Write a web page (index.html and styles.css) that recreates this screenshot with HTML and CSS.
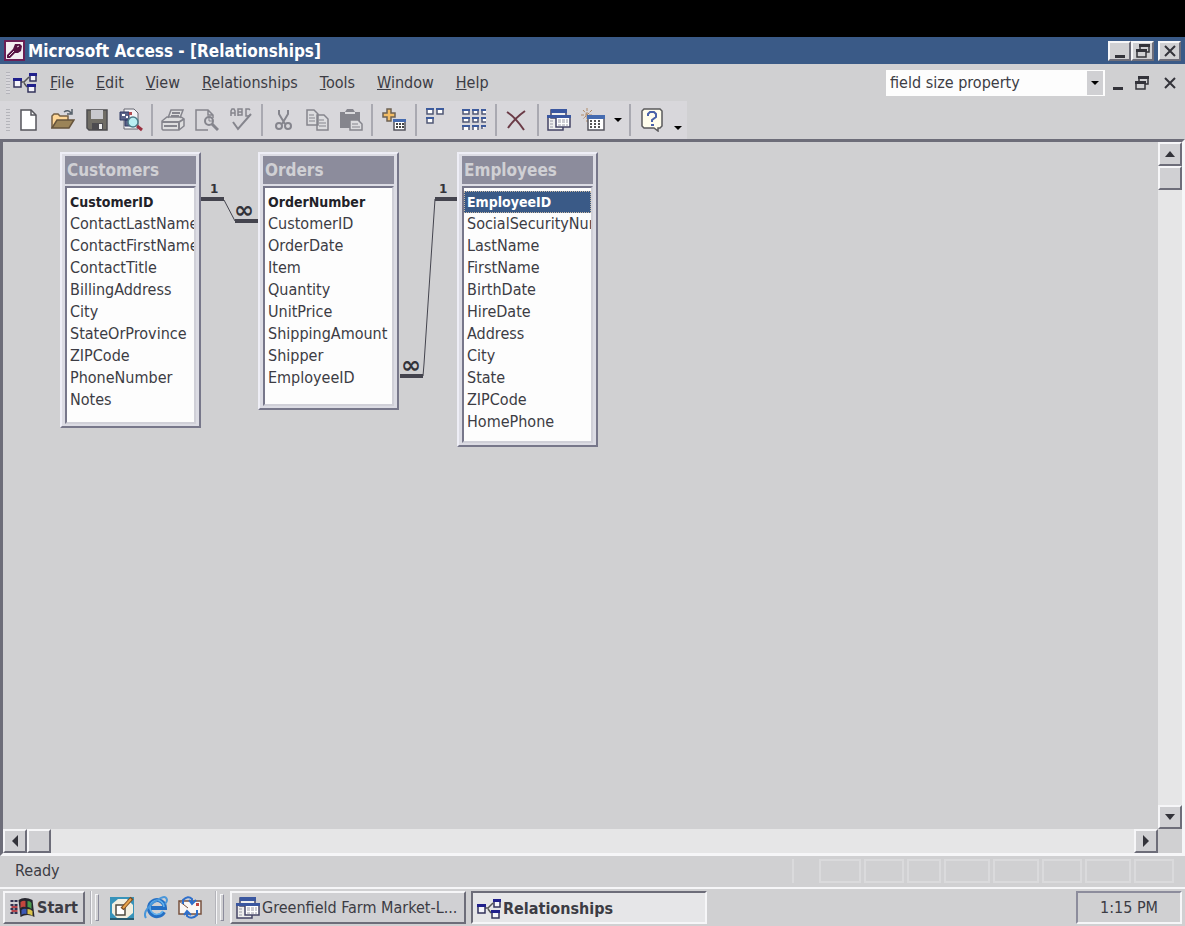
FILE: index.html
```
<!DOCTYPE html>
<html lang="en">
<head>
  <meta charset="UTF-8">
  <meta name="viewport" content="width=device-width, initial-scale=1.0">
  <title>Microsoft Access - [Relationships]</title>
  <link rel="stylesheet" href="styles.css">
</head>
<body>
  <svg class="defs" aria-hidden="true">
    <symbol id="rel" viewBox="0 0 24 20">
      <path d="M8 9h3l5-5M11 10l3 4" fill="none" stroke="#555" stroke-width="1.5"/>
      <path d="M1 6h7v8H1zM17 1h6v7h-6zM15 12h7v7h-7z" fill="#f4f4fa" stroke="#33335c" stroke-width="1.5"/>
      <path d="M0 5h9v3H0zM16 0h8v3h-8zM14 11h9v3h-9z" fill="#20208c"/>
    </symbol>
    <symbol id="min" viewBox="0 0 14 14"><path d="M2 11h10v3H2z" fill="#33333a"/></symbol>
    <symbol id="restore" viewBox="0 0 14 14">
      <path d="M4 5V1h9v7h-3M1 6h9v7H1z" fill="none" stroke="#33333a" stroke-width="1.5"/>
      <path d="M3 0h11v3H3zM0 5h11v3H0z" fill="#33333a"/>
    </symbol>
    <symbol id="close" viewBox="0 0 14 14"><path d="M2 2l10 10M12 2L2 12" stroke="#33333a" stroke-width="2"/></symbol>
    <symbol id="tables" viewBox="0 0 24 22">
      <path d="M1 7h15v14H1zM4 1h15v8H4z" fill="#eee" stroke="#444466" stroke-width="1.5"/>
      <path d="M4 0h16v4H4zM0 6h10v3H0z" fill="#3a57a0"/>
      <path d="M9 7h14v11H9z" fill="#fff" stroke="#444466" stroke-width="1.5"/>
      <path d="M8 6h16v3H8z" fill="#3a57a0"/>
      <path d="M11 11h10M11 13h10M11 16h10M3 12h4M3 15h4M3 18h4" stroke="#9a9aa6" stroke-dasharray="3 1"/>
    </symbol>
  </svg>

  <header class="titlebar">
    <svg class="key" viewBox="0 0 21 21">
      <path d="M1 1h19v19H1z" fill="#f3eef2" stroke="#6b1f55" stroke-width="2"/>
      <path d="M11 4h5l2 2-1 5-3 2h-3l-5 5H3v-3l6-6z" fill="#571343"/>
      <path d="M13 7l2-1M5 16l5-5" stroke="#e9d9e4"/>
    </svg>
    <h1>Microsoft Access - [Relationships]</h1>
    <div class="window-buttons">
      <button class="raised" aria-label="Minimize"><svg><use href="#min"/></svg></button>
      <button class="raised" aria-label="Restore"><svg><use href="#restore"/></svg></button>
      <button class="raised last" aria-label="Close"><svg><use href="#close"/></svg></button>
    </div>
  </header>

  <nav class="menubar">
    <span class="grip"></span>
    <svg class="rel-icon"><use href="#rel"/></svg>
    <button><u>F</u>ile</button>
    <button><u>E</u>dit</button>
    <button><u>V</u>iew</button>
    <button><u>R</u>elationships</button>
    <button><u>T</u>ools</button>
    <button><u>W</u>indow</button>
    <button><u>H</u>elp</button>
    <div class="ask">
      <input type="text" value="field size property" aria-label="Type a question for help">
      <button aria-label="Show questions"><svg viewBox="0 0 8 4"><path d="M0 0h8L4 4z"/></svg></button>
    </div>
    <div class="doc-buttons">
      <button aria-label="Minimize document"><svg><use href="#min"/></svg></button>
      <button aria-label="Restore document"><svg><use href="#restore"/></svg></button>
      <button class="last" aria-label="Close document"><svg><use href="#close"/></svg></button>
    </div>
  </nav>

  <div class="toolbar-row">
    <div class="toolbar">
      <span class="grip"></span>
      <button aria-label="New"><svg viewBox="0 0 24 24"><path d="M4 2h10l5 5v15H4z" fill="#fff" stroke="#55555c" stroke-width="1.5"/><path d="M14 2v5h5" fill="none" stroke="#55555c" stroke-width="1.5"/></svg></button>
      <button aria-label="Open"><svg viewBox="0 0 24 24"><path d="M1 20V8l2-2h4l2 2h8v4" fill="#ffd797" stroke="#756044" stroke-width="1.5"/><path d="M1 20l5-8h17l-5 8z" fill="#9b8458" stroke="#66543c" stroke-width="1.5"/><path d="M13 4q4-3 7 1M21 1v5h-5" fill="none" stroke="#55606a" stroke-width="1.5"/></svg></button>
      <button aria-label="Save"><svg viewBox="0 0 24 24"><path d="M2 2h20v20H4l-2-2z" fill="#706d65" stroke="#4e4e50" stroke-width="1.5"/><path d="M6 2h12v9H6z" fill="#c9c9ce"/><path d="M7 15h11v7H7z" fill="#4d4c50"/><path d="M14 16h3v5h-3z" fill="#eee"/></svg></button>
      <button aria-label="Search"><svg viewBox="0 0 24 24"><path d="M5 1h10l4 4v16H5z" fill="#f3f3f6" stroke="#666670"/><path d="M1 4h9v8H1zM6 12h7v6H6z" fill="#5a6388" stroke="#333c66"/><path d="M3 6h3v2H3zM7 8h2v2H7z" fill="#fff"/><path d="M10 4h3v3h-3z" fill="#b14b50"/><circle cx="14" cy="14" r="5" fill="#b9eef2" stroke="#4d7c88" stroke-width="1.5"/><path d="M18 18l5 4" stroke="#9a3040" stroke-width="3"/></svg></button>
      <span class="sep"></span>
      <button aria-label="Print" disabled><svg viewBox="0 0 24 24"><path d="M7 10l3-8h12l-3 8M1 13l5-4h14l3 2v7l-5 4H2l-1-1z" fill="#dededf" stroke="#85858d" stroke-width="1.5"/><path d="M1 14h17l5-3M18 14v8M11 5h8M10 8h8M3 18h13" fill="none" stroke="#85858d" stroke-width="2"/></svg></button>
      <button aria-label="Print Preview" disabled><svg viewBox="0 0 24 24"><path d="M13 22H1V2h12l5 5v3M13 2v5h5" fill="none" stroke="#85858d" stroke-width="1.5"/><circle cx="14" cy="13" r="4" fill="none" stroke="#85858d" stroke-width="2"/><path d="M17 16l6 6" stroke="#85858d" stroke-width="3"/><path d="M14 10v3h3" fill="none" stroke="#85858d"/></svg></button>
      <button aria-label="Spelling" disabled><svg viewBox="0 0 24 24"><path d="M2 8V3l1-2h2l1 2v5M2 5h4M9 8V1h4v6H9M9 4h4M21 2l-1-1h-3v7h3l1-1" fill="none" stroke="#85858d" stroke-width="1.5"/><path d="M4 14l5 7L22 6" fill="none" stroke="#85858d" stroke-width="2"/></svg></button>
      <span class="sep"></span>
      <button aria-label="Cut" disabled><svg viewBox="0 0 24 24"><path d="M8 2v4l6 10M17 2v4l-6 10" fill="none" stroke="#85858d" stroke-width="2"/><circle cx="8" cy="18" r="3" fill="none" stroke="#85858d" stroke-width="2"/><circle cx="17" cy="18" r="3" fill="none" stroke="#85858d" stroke-width="2"/></svg></button>
      <button aria-label="Copy" disabled><svg viewBox="0 0 24 24"><path d="M2 2h7l4 4v11H2zM12 7h7l4 4v11H12z" fill="#dcdcdf" stroke="#85858d" stroke-width="1.5"/><path d="M4 7h5M4 10h6M4 13h6M14 12h5M14 15h7M14 18h7" stroke="#85858d"/></svg></button>
      <button aria-label="Paste" disabled><svg viewBox="0 0 24 24"><path d="M1 4h5l2-3h6l2 3h5v16H1z" fill="#85858d"/><path d="M6 5h10" stroke="#dadadd" stroke-width="2"/><path d="M11 12h8l4 4v6H11z" fill="#dcdcdf" stroke="#85858d" stroke-width="1.5"/><path d="M13 16h6M13 19h8" stroke="#85858d"/></svg></button>
      <span class="sep"></span>
      <button class="wide" aria-label="Show Table"><svg viewBox="0 0 24 24"><path d="M5 1h4v4h4v4H9v4H5V9H1V5h4z" fill="#f3bd65" stroke="#6e6253" stroke-width="1.5"/><path d="M12 12h11v10H12z" fill="#fff" stroke="#55555f" stroke-width="1.5"/><path d="M11 11h13v3H11z" fill="#456bb0"/><path d="M14 16h8M14 19h8" stroke="#444" stroke-width="2" stroke-dasharray="2 1"/></svg></button>
      <span class="sep"></span>
      <button class="wide" aria-label="Show Direct Relationships"><svg viewBox="0 0 24 24"><path d="M1 1h6v5H1zM11 1h6v5h-6zM1 10h6v5H1z" fill="#fff" stroke="#505876" stroke-width="1.5"/><path d="M0 0h8v2H0zM10 0h8v2h-8zM0 9h8v2H0z" fill="#3d5b9d"/></svg></button>
      <button class="wide" aria-label="Show All Relationships"><svg viewBox="0 0 24 24"><path d="M1 2h6v4H1zM11 2h5v4h-5zM24 2h-4v4h4M1 10h6v4H1zM11 10h5v4h-5zM24 10h-4v4h4M1 22v-4h6v4M11 22v-4h5v4M24 18h-4v3" fill="#fff" stroke="#505876" stroke-width="1.5"/><path d="M0 1h8v2H0zM10 1h7v2h-7zM19 1h5v2h-5zM0 9h8v2H0zM10 9h7v2h-7zM19 9h5v2h-5zM0 17h8v2H0zM10 17h7v2h-7zM19 17h5v2h-5z" fill="#3d5b9d"/></svg></button>
      <span class="sep"></span>
      <button aria-label="Delete"><svg viewBox="0 0 24 24"><path d="M2 4q8 5 17 18M20 3Q10 10 3 20" fill="none" stroke="#6b3b47" stroke-width="2"/></svg></button>
      <span class="sep"></span>
      <button aria-label="Database Window"><svg viewBox="0 -1 24 24"><use href="#tables" width="24" height="22"/></svg></button>
      <button aria-label="New Object"><svg viewBox="0 0 24 24"><path d="M6 0v14M0 7h12M2 2l9 10M11 2L2 11" stroke="#b08a68" stroke-dasharray="3 1"/><path d="M7 8h16v14H7z" fill="#fff" stroke="#55555f" stroke-width="1.5"/><path d="M6 7h18v4H6z" fill="#456bb0"/><path d="M9 13h12M9 16h12M9 19h12" stroke="#555" stroke-width="2" stroke-dasharray="2 2"/></svg></button>
      <button class="drop" aria-label="New Object list"><svg viewBox="0 0 8 4"><path d="M0 0h8L4 4z"/></svg></button>
      <span class="sep"></span>
      <button class="wide" aria-label="Help"><svg viewBox="0 0 24 24"><path d="M4 1h16l2 2v15l-2 2h-2v3l-4-3H4l-2-2V3z" fill="#fffdec" stroke="#5a5a5c" stroke-width="1.5"/><path d="M8 8V6l2-2h4l2 2v3l-4 3v2" fill="none" stroke="#4a62a8" stroke-width="2"/><path d="M11 16h3v2h-3z" fill="#4a62a8"/></svg></button>
      <button class="drop low" aria-label="Toolbar Options"><svg viewBox="0 0 8 4"><path d="M0 0h8L4 4z"/></svg></button>
    </div>
  </div>

  <main class="workspace">
    <div class="canvas">
      <svg class="joins">
        <path d="M198 57h23M232 79h23M397 234h23M432 57h22" class="thick"/>
        <path d="M221 58l11 21M420 234l1-12L432 57" class="thin"/>
        <text x="207" y="51" class="one">1</text>
        <text x="231" y="76" class="many">∞</text>
        <text x="436" y="51" class="one">1</text>
        <text x="398" y="231" class="many">∞</text>
      </svg>
      <section class="table-window customers">
        <h2>Customers</h2>
        <ul>
          <li class="pk">CustomerID</li>
          <li>ContactLastName</li>
          <li>ContactFirstName</li>
          <li>ContactTitle</li>
          <li>BillingAddress</li>
          <li>City</li>
          <li>StateOrProvince</li>
          <li>ZIPCode</li>
          <li>PhoneNumber</li>
          <li>Notes</li>
        </ul>
      </section>
      <section class="table-window orders">
        <h2>Orders</h2>
        <ul>
          <li class="pk">OrderNumber</li>
          <li>CustomerID</li>
          <li>OrderDate</li>
          <li>Item</li>
          <li>Quantity</li>
          <li>UnitPrice</li>
          <li>ShippingAmount</li>
          <li>Shipper</li>
          <li>EmployeeID</li>
        </ul>
      </section>
      <section class="table-window employees">
        <h2>Employees</h2>
        <ul>
          <li class="pk selected">EmployeeID</li>
          <li>SocialSecurityNumber</li>
          <li>LastName</li>
          <li>FirstName</li>
          <li>BirthDate</li>
          <li>HireDate</li>
          <li>Address</li>
          <li>City</li>
          <li>State</li>
          <li>ZIPCode</li>
          <li>HomePhone</li>
        </ul>
      </section>
    </div>
    <div class="scroll vertical">
      <button class="raised" aria-label="Scroll up"><svg viewBox="0 0 12 12"><path d="M1 9h10L6 3z"/></svg></button>
      <div class="raised thumb"></div>
      <button class="raised end" aria-label="Scroll down"><svg viewBox="0 0 12 12"><path d="M1 3h10L6 9z"/></svg></button>
    </div>
    <div class="scroll horizontal">
      <button class="raised" aria-label="Scroll left"><svg viewBox="0 0 12 12"><path d="M9 0v12L3 6z"/></svg></button>
      <div class="raised thumb"></div>
      <button class="raised end" aria-label="Scroll right"><svg viewBox="0 0 12 12"><path d="M3 0v12l6-6z"/></svg></button>
    </div>
  </main>

  <div class="statusbar">
    <span class="message">Ready</span>
    <span class="panel w42"></span>
    <span class="panel w40"></span>
    <span class="panel w34"></span>
    <span class="panel w46"></span>
    <span class="panel w46"></span>
    <span class="panel w40"></span>
    <span class="panel w46"></span>
    <span class="panel w40"></span>
  </div>

  <footer class="taskbar">
    <button class="raised start">
      <svg viewBox="0 0 24 22">
        <path d="M0 4h3M4 4h3M0 8h3M4 8h3M0 12h3M4 12h3M0 16h3M4 16h3" stroke="#333350" stroke-width="2"/>
        <path d="M1 10h6M1 14h6" stroke="#b5444c" stroke-width="2"/>
        <path d="M8 3q6-4 14 0l2 17q-7-4-14 0z" fill="#26262e"/>
        <path d="M10 5q3-2 5-1v6q-3-1-5 1z" fill="#c4473e"/><path d="M17 4q3 0 4 2v6q-2-2-4-2z" fill="#4b9a4c"/>
        <path d="M11 13q2-2 5-1v5q-3-1-5 1z" fill="#3b57b4"/><path d="M17 12q3 0 5 2v5q-2-2-5-2z" fill="#dbc44b"/>
      </svg>
      Start
    </button>
    <span class="bar"></span>
    <span class="handle"></span>
    <button class="quick" aria-label="Show Desktop"><svg viewBox="0 0 24 24"><path d="M0 1h24v22H0z" fill="#3793ba"/><path d="M2 8l6-5h9l6 6v8l-6 5H7l-5-5z" fill="#f2efe0"/><path d="M6 9h9v10H6z" fill="#fff" stroke="#4e4b40" stroke-width="1.5"/><path d="M12 13L22 2" stroke="#7d4b20" stroke-width="4"/><path d="M13 12l8-9" stroke="#e8a44a" stroke-width="2"/><path d="M0 23h24" stroke="#285b70" stroke-width="2"/></svg></button>
    <button class="quick" aria-label="Internet Explorer"><svg viewBox="0 0 24 24"><path d="M20 16a8 8 0 1 1 1-4H7" fill="none" stroke="#256fc4" stroke-width="4"/><path d="M19 15a7 7 0 1 1 1-4" fill="none" stroke="#62b2ee" stroke-width="1.5"/><path d="M2 22Q-2 16 9 7 22-3 23 4q0 2-2 4" fill="none" stroke="#4a97da" stroke-width="2"/></svg></button>
    <button class="quick" aria-label="Outlook Express"><svg viewBox="0 0 24 24"><path d="M1 5h22v13H1z" fill="#fbf7f4" stroke="#77513f" stroke-width="1.5"/><path d="M1 5l9 7" stroke="#77513f"/><path d="M18 7h3v3h-3z" fill="#c24640"/><path d="M5 8V4q5-5 9-1v4M11 4l3 4 4-4M19 14v5q-5 5-10 1v-4M6 19l3-4 4 4" fill="none" stroke="#2e6fcb" stroke-width="2"/></svg></button>
    <span class="bar second"></span>
    <span class="handle"></span>
    <button class="raised task"><svg class="icon"><use href="#tables"/></svg>Greenfield Farm Market-L...</button>
    <button class="task active"><svg class="icon"><use href="#rel"/></svg>Relationships</button>
    <div class="tray">1:15 PM</div>
  </footer>
</body>
</html>
```
FILE: styles.css
```
* {
  box-sizing: border-box;
}
body {
  display: flex;
  flex-direction: column;
  min-height: 100vh;
  margin: 0;
  padding-top: 37px;
  background: #000;
  color: #3c3c44;
  font-family: "DejaVu Sans Condensed", "DejaVu Sans", sans-serif;
  font-size: 16px;
}
button, input {
  margin: 0;
  padding: 0;
  border: 0;
  background: none;
  color: inherit;
  font: inherit;
}
svg {
  display: block;
  flex: none;
}
h1, h2, ul {
  margin: 0;
  padding: 0;
}
.defs {
  position: absolute;
  width: 0;
  height: 0;
}
.raised {
  display: flex;
  align-items: center;
  justify-content: center;
  background: #d0d0d3;
  border: 2px solid;
  border-color: #f6f6f8 #6d6d79 #6d6d79 #f6f6f8;
}

/* title bar */
.titlebar {
  display: flex;
  align-items: center;
  height: 27px;
  padding: 0 4px;
  background: #3a5a87;
  color: #fff;
}
.titlebar .key {
  width: 21px;
  height: 21px;
}
.titlebar h1 {
  margin-left: 3px;
  font-size: 17px;
}
.window-buttons {
  display: flex;
  margin-left: auto;
}
.window-buttons button {
  width: 23px;
  height: 20px;
}
.window-buttons svg, .doc-buttons svg {
  width: 14px;
  height: 14px;
}
.window-buttons .last {
  margin-left: 4px;
}

/* menu */
.menubar {
  display: flex;
  align-items: center;
  height: 37px;
  padding: 0 3px 0 6px;
  background: #d0d0d2;
}
.menubar > button {
  padding: 0 11px;
}
.grip {
  width: 4px;
  height: 22px;
  background: repeating-linear-gradient(#b4b4ba 0 1px, #d8d7db 1px 3px);
}
.rel-icon {
  width: 24px;
  height: 20px;
  margin: 0 2px 0 3px;
}
.ask {
  display: flex;
  width: 219px;
  height: 26px;
  margin-left: auto;
  padding: 1px 2px 1px 0;
  background: #fdfdfd;
}
.ask input {
  flex: 1;
  min-width: 0;
  padding-left: 4px;
}
.ask button {
  width: 16px;
  padding: 0 4px;
  background: #d0d0d3;
}
.doc-buttons {
  display: flex;
  margin-left: 1px;
}
.doc-buttons button {
  padding: 0 5px;
}
.doc-buttons .last {
  margin-left: 4px;
}

/* toolbar */
.toolbar-row {
  display: flex;
  height: 38px;
  background: #d0d0d2;
}
.toolbar {
  display: flex;
  align-items: center;
  padding: 0 1px 0 6px;
  background: #d8d7db;
}
.toolbar .grip {
  margin-right: 2px;
}
.toolbar button {
  display: flex;
  justify-content: center;
  width: 34px;
}
.toolbar .wide {
  width: 36px;
}
.toolbar svg {
  width: 24px;
  height: 24px;
}
.sep {
  width: 2px;
  height: 32px;
  margin: 0 3px;
  background: #a9a9b1;
}
.toolbar .drop {
  width: 16px;
}
.toolbar .drop svg {
  width: 8px;
  height: 4px;
}
.toolbar .low {
  align-self: flex-end;
  margin-bottom: 9px;
}

/* relationships window */
.workspace {
  display: grid;
  grid-template-columns: 1fr 24px;
  grid-template-rows: 1fr 24px;
  flex: 1;
  background: #d0d0d2;
  border: 3px solid #f6f6f8;
  border-top-color: #6d6d79;
  border-left-color: #6d6d79;
}
.canvas {
  position: relative;
  overflow: hidden;
}
.joins {
  position: absolute;
  width: 100%;
  height: 100%;
}
.joins .thick {
  fill: none;
  stroke: #44444e;
  stroke-width: 4;
}
.joins .thin {
  fill: none;
  stroke: #44444e;
}
.joins text {
  fill: #33333a;
  font-family: "DejaVu Sans", sans-serif;
  font-weight: bold;
}
.joins .one {
  font-size: 12px;
}
.joins .many {
  font-size: 24px;
}
.table-window {
  position: absolute;
  top: 10px;
  width: 141px;
  padding: 2px 3px;
  background: #dcdce4;
  border: 2px solid;
  border-color: #eeeef6 #77778a #77778a #eeeef6;
}
.customers {
  left: 57px;
}
.orders {
  left: 255px;
}
.employees {
  left: 454px;
}
.table-window h2 {
  height: 28px;
  padding-left: 2px;
  background: #8c8c9c;
  color: #d0d0d4;
  font-size: 17px;
  line-height: 28px;
}
.table-window ul {
  margin-top: 2px;
  padding: 3px 0 8px;
  background: #fdfdfd;
  border: 2px solid;
  border-color: #77778a #d0d0d8 #d0d0d8 #77778a;
  list-style: none;
}
.customers ul {
  padding-bottom: 11px;
}
.orders ul {
  padding-bottom: 15px;
}
.table-window li {
  height: 22px;
  padding-left: 3px;
  overflow: hidden;
  line-height: 22px;
}
.table-window .pk {
  color: #222228;
  font-size: 14px;
  font-weight: bold;
}
.table-window .selected {
  background: #3a5a87;
  color: #fff;
  outline: 1px dotted #c9b9a4;
  outline-offset: -1px;
}

/* scroll bars */
.scroll {
  display: flex;
  background: #e6e6e7;
}
.scroll .raised {
  flex: none;
  width: 24px;
  height: 24px;
}
.scroll svg {
  width: 12px;
  height: 12px;
  fill: #33333a;
}
.vertical {
  flex-direction: column;
}
.vertical .end {
  margin-top: auto;
}
.horizontal .end {
  margin-left: auto;
}

/* status bar */
.statusbar {
  display: flex;
  gap: 3px;
  height: 31px;
  padding: 3px 11px 4px 0;
  background: #d0d0d2;
}
.message {
  flex: 1;
  margin-right: 22px;
  padding-left: 15px;
  border-right: 2px solid #dadadc;
  line-height: 24px;
}
.panel {
  border: 2px solid #dadadc;
}
.w34 {
  width: 34px;
}
.w40 {
  width: 40px;
}
.w42 {
  width: 42px;
}
.w46 {
  width: 46px;
}

/* taskbar */
.taskbar {
  display: flex;
  align-items: center;
  height: 39px;
  padding: 0 3px;
  background: #d0d0d2;
  border-top: 2px solid #f6f6f8;
}
.start {
  gap: 2px;
  width: 82px;
  height: 33px;
  font-weight: bold;
}
.start svg {
  width: 25px;
  height: 22px;
}
.bar {
  width: 2px;
  height: 33px;
  margin: 0 3px 0 5px;
  background: #b4b4ba;
  border-right: 1px solid #f6f6f8;
}
.handle {
  width: 4px;
  height: 27px;
  margin-right: 6px;
  border: 1px solid;
  border-color: #f6f6f8 #8c8c9c #8c8c9c #f6f6f8;
}
.quick {
  width: 34px;
  padding: 0 5px;
}
.quick svg {
  width: 24px;
  height: 24px;
}
.second {
  margin-left: 8px;
}
.task {
  display: flex;
  align-items: center;
  justify-content: flex-start;
  width: 236px;
  height: 33px;
  margin-right: 5px;
  padding-left: 4px;
  white-space: nowrap;
}
.task .icon {
  width: 24px;
  height: 22px;
  margin-right: 2px;
}
.active {
  padding-top: 2px;
  background: #e6e6e8;
  border: 2px solid;
  border-color: #6d6d79 #f6f6f8 #f6f6f8 #6d6d79;
  font-weight: bold;
}
.tray {
  width: 106px;
  height: 33px;
  margin-left: auto;
  border: 2px solid;
  border-color: #8c8c9c #f6f6f8 #f6f6f8 #8c8c9c;
  line-height: 30px;
  text-align: center;
}
```
